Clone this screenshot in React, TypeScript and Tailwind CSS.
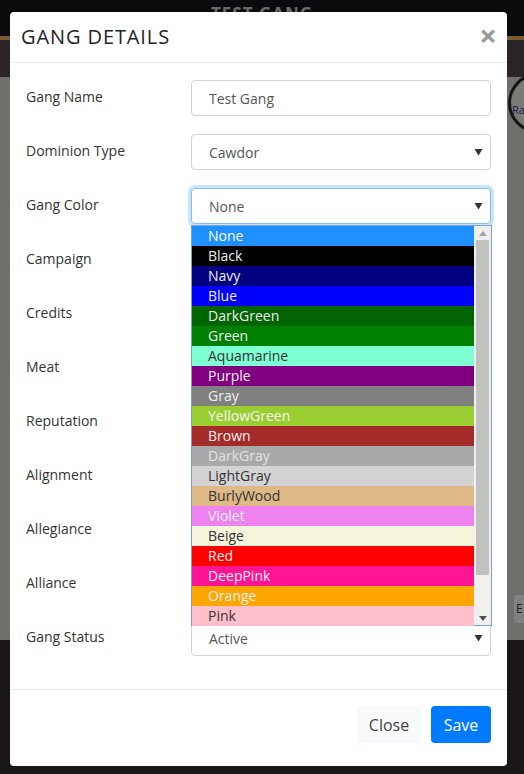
import React from "react";

const font = { fontFamily: '"Open Sans", "Noto Sans", sans-serif' };

const colors: { name: string; bg: string; fg: string }[] = [
  { name: "None", bg: "bg-[#1e90ff]", fg: "text-white" },
  { name: "Black", bg: "bg-[#000000]", fg: "text-[#eeeeee]" },
  { name: "Navy", bg: "bg-[#000080]", fg: "text-[#eeeeee]" },
  { name: "Blue", bg: "bg-[#0000ff]", fg: "text-[#eeeeee]" },
  { name: "DarkGreen", bg: "bg-[#006400]", fg: "text-[#eeeeee]" },
  { name: "Green", bg: "bg-[#008000]", fg: "text-[#eeeeee]" },
  { name: "Aquamarine", bg: "bg-[#7fffd4]", fg: "text-[#333333]" },
  { name: "Purple", bg: "bg-[#800080]", fg: "text-[#eeeeee]" },
  { name: "Gray", bg: "bg-[#808080]", fg: "text-[#eeeeee]" },
  { name: "YellowGreen", bg: "bg-[#9acd32]", fg: "text-[#f4f4f4]" },
  { name: "Brown", bg: "bg-[#a52a2a]", fg: "text-[#eeeeee]" },
  { name: "DarkGray", bg: "bg-[#a9a9a9]", fg: "text-[#e2e2e2]" },
  { name: "LightGray", bg: "bg-[#d3d3d3]", fg: "text-[#333333]" },
  { name: "BurlyWood", bg: "bg-[#deb887]", fg: "text-[#333333]" },
  { name: "Violet", bg: "bg-[#ee82ee]", fg: "text-[#eeeeee]" },
  { name: "Beige", bg: "bg-[#f5f5dc]", fg: "text-[#333333]" },
  { name: "Red", bg: "bg-[#ff0000]", fg: "text-[#eeeeee]" },
  { name: "DeepPink", bg: "bg-[#ff1493]", fg: "text-[#eeeeee]" },
  { name: "Orange", bg: "bg-[#ffa500]", fg: "text-[#eeeeee]" },
  { name: "Pink", bg: "bg-[#ffc0cb]", fg: "text-[#333333]" },
];

const rows = [
  { label: "Gang Name", value: "Test Gang", kind: "input" },
  { label: "Dominion Type", value: "Cawdor", kind: "select" },
  { label: "Gang Color", value: "None", kind: "focus" },
  { label: "Campaign", value: "", kind: "select" },
  { label: "Credits", value: "", kind: "input" },
  { label: "Meat", value: "", kind: "input" },
  { label: "Reputation", value: "", kind: "input" },
  { label: "Alignment", value: "", kind: "select" },
  { label: "Allegiance", value: "", kind: "select" },
  { label: "Alliance", value: "", kind: "select" },
  { label: "Gang Status", value: "Active", kind: "select" },
];

function Caret() {
  return (
    <svg width="9" height="8" viewBox="0 0 9 8" className="shrink-0">
      <path d="M0.5 1 L8.5 1 L4.5 7.5 Z" fill="#333" />
    </svg>
  );
}

function Field({ value, kind }: { value: string; kind: string }) {
  const border =
    kind === "focus"
      ? "border-[#80bdff] shadow-[0_0_0_3px_rgba(0,123,255,0.2)]"
      : "border-[#ced4da]";
  return (
    <div
      className={`flex h-[36px] w-[300px] items-center justify-between rounded-[4px] border bg-white pl-[17px] pr-[7px] text-[14px] text-[#555] ${border}`}
    >
      <span>{value}</span>
      {kind !== "input" && <Caret />}
    </div>
  );
}

function ColorList() {
  return (
    <div className="absolute left-[181px] top-[162px] flex h-[401px] w-[301px] border border-[#7f9ed3] bg-white">
      <div className="flex flex-1 flex-col">
        {colors.map((c) => (
          <div
            key={c.name}
            className={`flex h-[20px] items-center pl-[16px] text-[14px] leading-[20px] ${c.bg} ${c.fg}`}
          >
            {c.name}
          </div>
        ))}
      </div>
      <div className="flex w-[17px] flex-col items-center bg-[#f0f0f0]">
        <div className="flex h-[14px] items-center justify-center">
          <svg width="8" height="5" viewBox="0 0 8 5">
            <path d="M0 5 L8 5 L4 0 Z" fill="#a3a3a3" />
          </svg>
        </div>
        <div className="h-[335px] w-[13px] bg-[#c1c1c1]" />
        <div className="flex-1" />
        <div className="flex h-[14px] items-center justify-center">
          <svg width="8" height="5" viewBox="0 0 8 5">
            <path d="M0 0 L8 0 L4 5 Z" fill="#505050" />
          </svg>
        </div>
      </div>
    </div>
  );
}

export default function App() {
  return (
    <div className="relative h-[774px] w-[524px] overflow-hidden bg-[#1b1618]" style={font}>
      {/* page behind the modal */}
      <div className="flex h-full flex-col">
        <div className="flex h-[36px] justify-center bg-[#0b0b0d] pt-[1px]">
          <span className="text-[17px] font-bold tracking-[1px] text-[#6b6b6b]">TEST GANG</span>
        </div>
        <div className="h-[4px] bg-[#7b5a2e]" />
        <div className="h-[37px] bg-[#2a2327]" />
        <div className="relative h-[563px] bg-[#6f6f6c]">
          <div className="absolute right-[-44px] top-[-4px] flex h-[60px] w-[60px] items-center justify-start rounded-full border-[3px] border-[#151515] bg-[#7a7a77] pl-[1px] pt-[14px] text-[11px] text-[#1a1a40]">
            Ra
          </div>
          <div className="absolute right-0 top-[518px] flex h-[28px] w-[10px] items-center rounded-l-[3px] bg-[#808080] pl-[2px] text-[12px] text-[#222]">
            E
          </div>
        </div>
        <div className="flex-1 bg-[#1b1618]" />
      </div>

      {/* modal */}
      <div className="absolute left-[10px] top-[12px] flex w-[497px] flex-col rounded-[4px] bg-white">
        <div className="flex h-[51px] items-center justify-between border-b border-[#e9ecef] pl-[11px] pr-[10px]">
          <h2 className="text-[20px] leading-none tracking-[0.9px] text-[#212529]">GANG DETAILS</h2>
          <span className="pb-[4px] text-[31px] font-bold leading-none text-[#999]">×</span>
        </div>

        <div className="relative flex flex-col gap-[18px] px-[16px] pb-[33px] pt-[17px]">
          {rows.map((r) => (
            <div key={r.label} className="flex items-center">
              <div className="w-[165px] pb-[4px] text-[14px] text-[#333]">{r.label}</div>
              <Field value={r.value} kind={r.kind} />
            </div>
          ))}
          <ColorList />
        </div>

        <div className="flex justify-end gap-[10px] border-t border-[#e9ecef] px-[16px] pb-[23px] pt-[16px]">
          <button className="h-[37px] w-[64px] rounded-[4px] bg-[#f8f9fa] text-[16px] text-[#444]">
            Close
          </button>
          <button className="h-[37px] w-[60px] rounded-[4px] bg-[#007bff] text-[16px] text-white">
            Save
          </button>
        </div>
      </div>
    </div>
  );
}
